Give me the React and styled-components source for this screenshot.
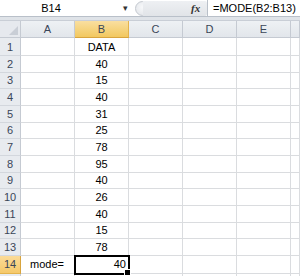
import styled, { createGlobalStyle } from "styled-components";

const GlobalStyle = createGlobalStyle`
  html, body {
    margin: 0;
    padding: 0;
    background: #ffffff;
    font-family: "Liberation Sans", Arial, sans-serif;
  }
`;

const data = [40, 15, 40, 31, 25, 78, 95, 40, 26, 40, 15, 78];
const columns = ["A", "B", "C", "D", "E", ""];

const Sheet = () => {
  return (
    <Page>
      <GlobalStyle />
      <FormulaBar>
        <NameBox>
          <span>B14</span>
          <Arrow>▾</Arrow>
        </NameBox>
        <FxArea>
          <Knob />
          <Fx>fx</Fx>
        </FxArea>
        <FormulaInput>=MODE(B2:B13)</FormulaInput>
      </FormulaBar>

      <Grid>
        <Corner />
        {columns.map((c, i) => (
          <ColHeader key={i} active={c === "B"}>
            {c}
          </ColHeader>
        ))}

        <RowHeader>1</RowHeader>
        <Cell />
        <Cell align="center">DATA</Cell>
        <Cell />
        <Cell />
        <Cell />
        <Cell />

        {data.map((v, i) => (
          <Row key={i} num={i + 2} value={v} />
        ))}

        <RowHeader active>14</RowHeader>
        <Cell pad="9px">mode=</Cell>
        <Cell align="right" selected>
          40
          <FillHandle />
        </Cell>
        <Cell />
        <Cell />
        <Cell />
        <Cell />

        <RowHeader />
        <Cell />
        <Cell />
        <Cell />
        <Cell />
        <Cell />
        <Cell />
      </Grid>
    </Page>
  );
};

const Row = ({ num, value }) => (
  <>
    <RowHeader>{num}</RowHeader>
    <Cell />
    <Cell align="center">{value}</Cell>
    <Cell />
    <Cell />
    <Cell />
    <Cell />
  </>
);

export default function App() {
  return <Sheet />;
}

/* ---------------------------- STYLED COMPONENTS --------------------------- */

const Page = styled.div`
  width: 300px;
  height: 276px;
  overflow: hidden;
  background: #ffffff;
`;

const FormulaBar = styled.div`
  height: 21px;
  display: flex;
  align-items: flex-start;
  background: #dfe3e8;
  box-sizing: border-box;
  border-bottom: 1px solid #c9ced6;
`;

const NameBox = styled.div`
  width: 134px;
  height: 17px;
  box-sizing: border-box;
  background: #ffffff;
  border-bottom: 1px solid #b9c0c9;
  display: flex;
  align-items: center;
  font-size: 11px;
  color: #000;

  span {
    flex: 1;
    text-align: center;
    padding-right: 16px;
  }
`;

const Arrow = styled.div`
  width: 14px;
  font-size: 9px;
  color: #333;
  text-align: center;
  padding-right: 2px;
`;

const FxArea = styled.div`
  width: 73px;
  height: 17px;
  box-sizing: border-box;
  display: flex;
  align-items: center;
  background: #ffffff;
  border-bottom: 1px solid #b9c0c9;
`;

const Knob = styled.div`
  width: 15px;
  height: 15px;
  margin-left: 1px;
  flex-shrink: 0;
  box-sizing: border-box;
  border-radius: 50%;
  border: 1px solid #c3c8cf;
  background: radial-gradient(circle at 50% 40%, #f7f8fa 0%, #e1e4e8 100%);
`;

const Fx = styled.div`
  flex: 1;
  height: 15px;
  margin-left: -7px;
  padding-left: 48px;
  box-sizing: border-box;
  border-radius: 0 2px 2px 0;
  background: linear-gradient(#eef0f3, #e1e4e8);
  font-family: "Liberation Serif", "Times New Roman", serif;
  font-style: italic;
  font-weight: bold;
  font-size: 11px;
  line-height: 15px;
  color: #333;
`;

const FormulaInput = styled.div`
  flex: 1;
  height: 17px;
  box-sizing: border-box;
  background: #ffffff;
  border-left: 1px solid #b9c0c9;
  border-bottom: 1px solid #b9c0c9;
  padding-left: 5px;
  font-size: 11px;
  line-height: 16px;
  color: #000;
  white-space: nowrap;
`;

const Grid = styled.div`
  display: grid;
  grid-template-columns: 21px repeat(5, 54px) 1fr;
  grid-template-rows: 17px 18px repeat(12, 16.667px) 18px 20px;
`;

const Corner = styled.div`
  background: #e6e9ee;
  border-right: 1px solid #c5cad2;
  border-bottom: 1px solid #c5cad2;
  position: relative;

  &::after {
    content: "";
    position: absolute;
    right: 2px;
    bottom: 2px;
    border-left: 9px solid transparent;
    border-bottom: 9px solid #c9ced6;
  }
`;

const ColHeader = styled.div`
  background: ${(p) =>
    p.active ? "linear-gradient(#f9dfa0, #f2c85f)" : "linear-gradient(#eef1f4, #e2e6eb)"};
  border-right: 1px solid ${(p) => (p.active ? "#e3b34c" : "#c5cad2")};
  border-bottom: 1px solid ${(p) => (p.active ? "#d8a43e" : "#c5cad2")};
  font-size: 11px;
  color: #3a4658;
  display: flex;
  align-items: center;
  justify-content: center;
`;

const RowHeader = styled.div`
  background: ${(p) => (p.active ? "linear-gradient(#fbdb98, #f5c96a)" : "#e8ebef")};
  border-right: 1px solid ${(p) => (p.active ? "#d8a43e" : "#c5cad2")};
  border-bottom: 1px solid ${(p) => (p.active ? "#e3b34c" : "#d3d7dd")};
  font-size: 11px;
  color: #3a4658;
  display: flex;
  align-items: center;
  justify-content: center;
`;

const Cell = styled.div`
  position: relative;
  border-right: 1px solid #dadcdf;
  border-bottom: 1px solid #dadcdf;
  font-size: 11px;
  color: #000;
  display: flex;
  align-items: center;
  justify-content: ${(p) =>
    p.align === "center" ? "center" : p.align === "right" ? "flex-end" : "flex-start"};
  padding-right: ${(p) => (p.align === "right" ? "2px" : "0")};
  padding-left: ${(p) => p.pad || "0"};
  white-space: nowrap;
  ${(p) =>
    p.selected &&
    `
    outline: 2px solid #000;
    outline-offset: -1px;
    z-index: 2;
  `}
`;

const FillHandle = styled.div`
  position: absolute;
  right: -3px;
  bottom: -3px;
  width: 5px;
  height: 5px;
  background: #000;
  border: 1px solid #fff;
`;
